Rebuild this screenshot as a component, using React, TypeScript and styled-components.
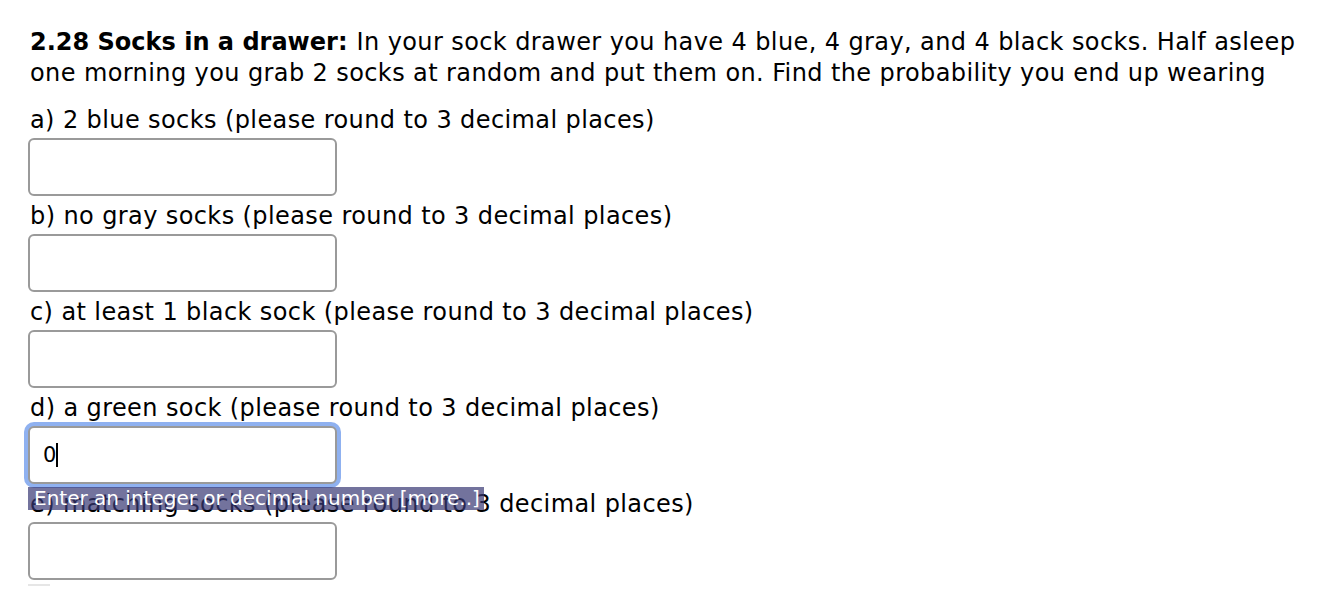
import React from "react";
import styled, { createGlobalStyle } from "styled-components";

const Global = createGlobalStyle`
  html, body { margin: 0; padding: 0; background: #fff; }
  body { font-family: "DejaVu Sans", sans-serif; color: #000; }
`;

const Page = styled.div`
  padding: 27px 30px 0 30px;
  font-size: 24px;
  line-height: 31px;
  letter-spacing: 0.4px;
`;

const Intro = styled.p`
  margin: 0 0 16px 0;
  white-space: nowrap;
`;

const Title = styled.b`
  font-weight: bold;
  letter-spacing: 0;
  margin-right: 1px;
`;

const Question = styled.div`
  display: flex;
  flex-direction: column;
  align-items: flex-start;
`;

const Label = styled.div`
  height: 31px;
  white-space: nowrap;
`;

const FieldWrap = styled.div`
  position: relative;
  margin: 2px 0 5px -2px;
`;

const Field = styled.input<{ $focused?: boolean }>`
  display: block;
  box-sizing: border-box;
  width: 309px;
  height: 58px;
  border: 2px solid #9a9a9a;
  border-radius: 6px;
  padding: 0 13px;
  font-family: "DejaVu Sans", sans-serif;
  font-size: 21px;
  color: #000;
  background: #fff;
  outline: none;
  box-shadow: ${(p) => (p.$focused ? "0 0 0 4px #8fb1f0" : "none")};
`;

const Caret = styled.span`
  position: absolute;
  left: 28px;
  top: 17px;
  width: 2px;
  height: 24px;
  background: #000;
`;

const Hint = styled.div`
  position: absolute;
  left: 0;
  top: 61px;
  z-index: 2;
  white-space: nowrap;
  background: rgba(56, 56, 116, 0.7);
  color: #fff;
  font-size: 20px;
  line-height: 23px;
  letter-spacing: 0;
  padding: 0 4px 0 6px;
`;

const Tail = styled.div`
  width: 22px;
  height: 2px;
  margin: -1px 0 0 -2px;
  background: #e6e6e6;
`;

const questions = [
  "a) 2 blue socks (please round to 3 decimal places)",
  "b) no gray socks (please round to 3 decimal places)",
  "c) at least 1 black sock (please round to 3 decimal places)",
  "d) a green sock (please round to 3 decimal places)",
  "e) matching socks (please round to 3 decimal places)",
];

export default function App() {
  return (
    <>
      <Global />
      <Page>
        <Intro>
          <Title>2.28 Socks in a drawer:</Title> In your sock drawer you have 4 blue, 4 gray, and 4 black
          socks. Half asleep
          <br />
          one morning you grab 2 socks at random and put them on. Find the probability you end up wearing
        </Intro>
        {questions.map((q, i) => {
          const focused = i === 3;
          return (
            <Question key={q}>
              <Label>{q}</Label>
              <FieldWrap>
                <Field $focused={focused} defaultValue={focused ? "0" : ""} readOnly />
                {focused && <Caret />}
                {focused && <Hint>Enter an integer or decimal number [more..]</Hint>}
              </FieldWrap>
            </Question>
          );
        })}
        <Tail />
      </Page>
    </>
  );
}
